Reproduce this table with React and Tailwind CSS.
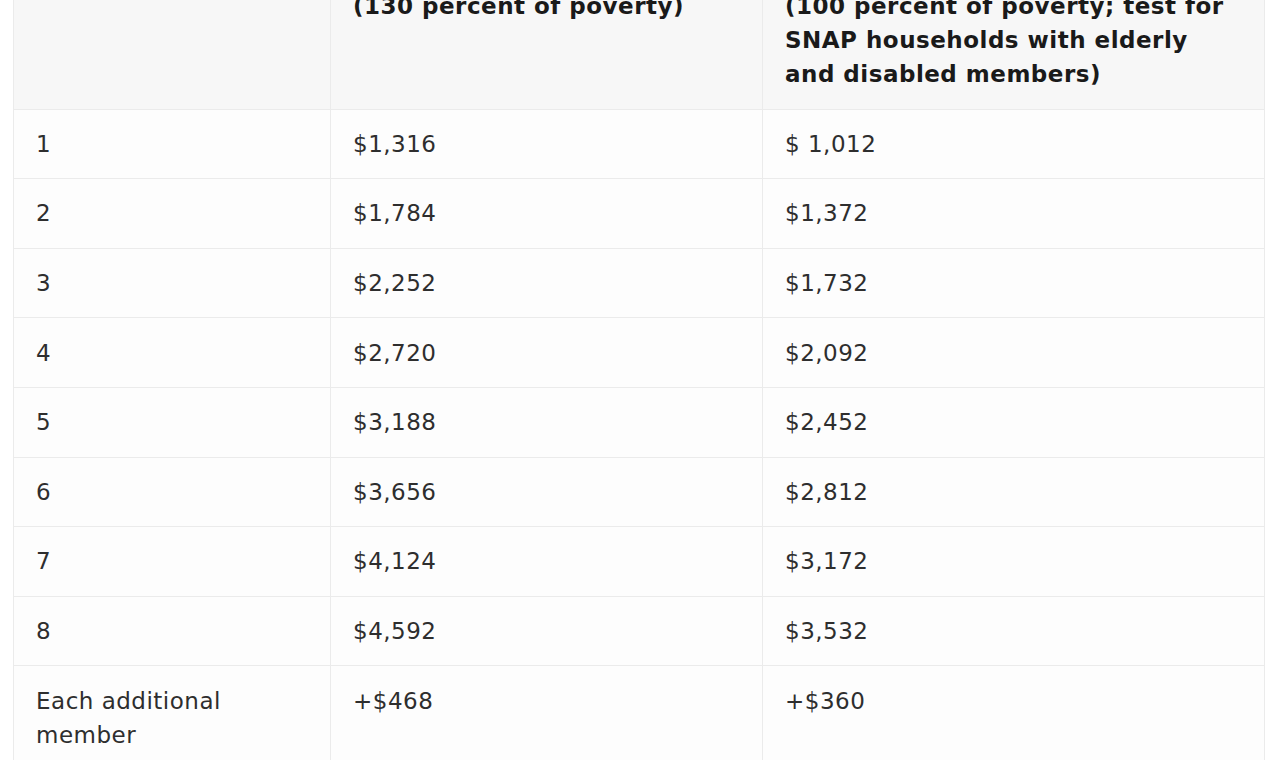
const rows = [
  ["1", "$1,316", "$ 1,012"],
  ["2", "$1,784", "$1,372"],
  ["3", "$2,252", "$1,732"],
  ["4", "$2,720", "$2,092"],
  ["5", "$3,188", "$2,452"],
  ["6", "$3,656", "$2,812"],
  ["7", "$4,124", "$3,172"],
  ["8", "$4,592", "$3,532"],
];

export default function App() {
  const cell =
    "border border-[#ebebeb] align-top px-[22px] py-[17.3px] leading-[34px]";

  return (
    <div className="h-[760px] overflow-hidden bg-white font-['DejaVu_Sans',Verdana,sans-serif] text-[23px] tracking-[0.5px]">
      <table className="mt-[-63px] ml-[13px] w-[1251px] table-fixed border-collapse">
        <colgroup>
          <col className="w-[317px]" />
          <col className="w-[432px]" />
          <col className="w-[502px]" />
        </colgroup>
        <thead>
          <tr className="bg-[#f7f7f7] text-[#1a1a1a] font-bold text-left">
            <th className={cell}>Household size</th>
            <th className={cell}>
              Gross monthly income limit
              <br />
              (130 percent of poverty)
            </th>
            <th className={cell}>
              Net monthly income limit
              <br />
              (100 percent of poverty; test for
              <br />
              SNAP households with elderly
              <br />
              and disabled members)
            </th>
          </tr>
        </thead>
        <tbody className="bg-[#fdfdfd] text-[#2e2e2e]">
          {rows.map((r) => (
            <tr key={r[0]}>
              <td className={cell}>{r[0]}</td>
              <td className={cell}>{r[1]}</td>
              <td className={cell}>{r[2]}</td>
            </tr>
          ))}
          <tr>
            <td className={cell}>
              Each additional
              <br />
              member
            </td>
            <td className={cell}>+$468</td>
            <td className={cell}>+$360</td>
          </tr>
        </tbody>
      </table>
    </div>
  );
}
